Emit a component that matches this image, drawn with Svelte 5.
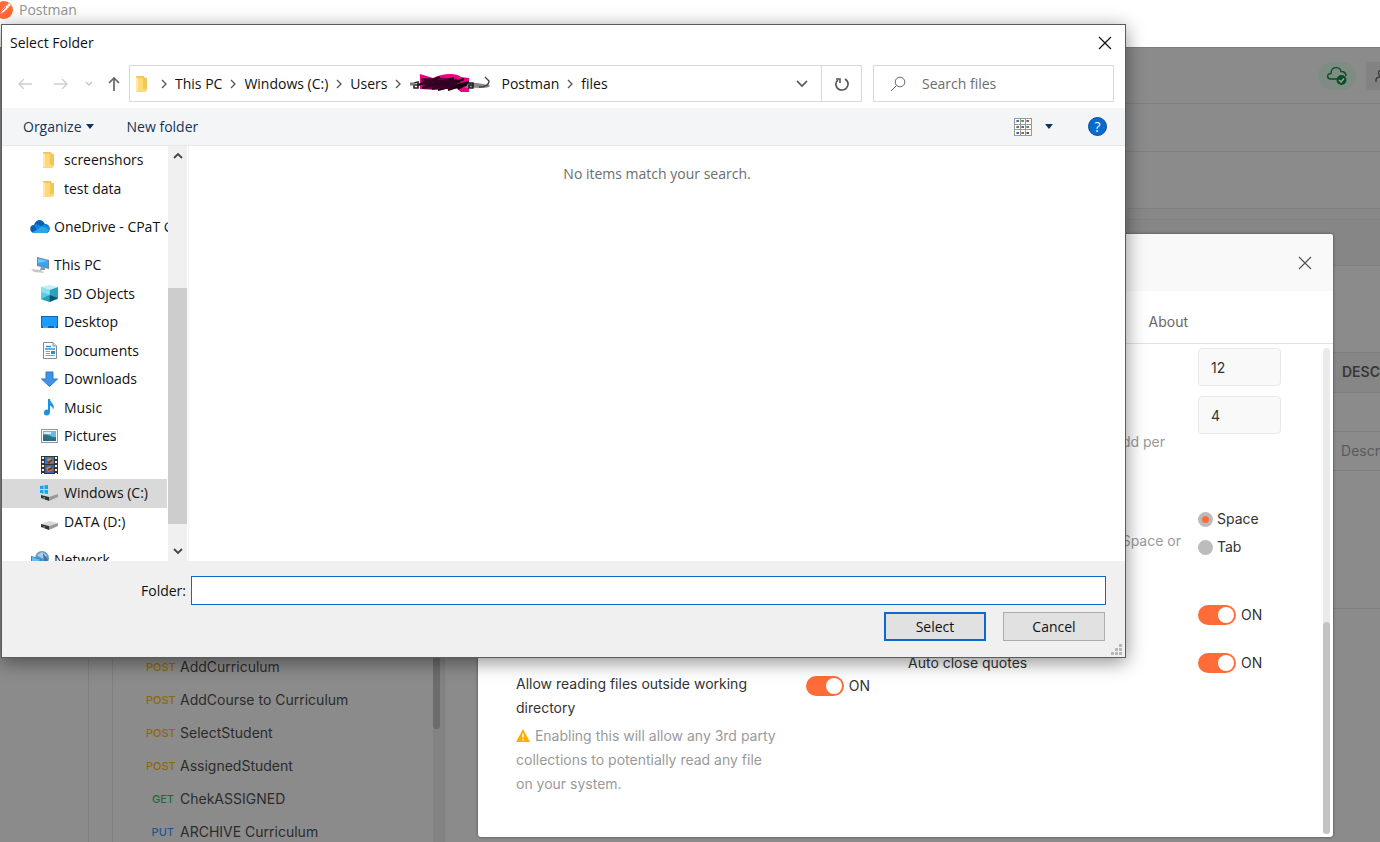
<script>
  let folder = "";
  let search = "";
  let fontSize = 12;
  let indentCount = 4;
  let indentType = "space";
  let allowOutside = true;
  let autoCloseBrackets = true;
  let autoCloseQuotes = true;
  let selected = "Windows (C:)";

  const requests = [
    { method: "POST", name: "AddCurriculum" },
    { method: "POST", name: "AddCourse to Curriculum" },
    { method: "POST", name: "SelectStudent" },
    { method: "POST", name: "AssignedStudent" },
    { method: "GET", name: "ChekASSIGNED" },
    { method: "PUT", name: "ARCHIVE Curriculum" },
  ];

  // Groups of the navigation tree, from top to bottom
  const groups = [
    {
      size: "pair",
      items: [
        { icon: "folder", name: "screenshors", child: true },
        { icon: "folder", name: "test data", child: true },
      ],
    },
    { size: "single", items: [{ icon: "cloud", name: "OneDrive - CPaT G" }] },
    {
      size: "computer",
      items: [
        { icon: "pc", name: "This PC" },
        { icon: "cube", name: "3D Objects", child: true },
        { icon: "desktop", name: "Desktop", child: true },
        { icon: "document", name: "Documents", child: true },
        { icon: "download", name: "Downloads", child: true },
        { icon: "music", name: "Music", child: true },
        { icon: "picture", name: "Pictures", child: true },
        { icon: "video", name: "Videos", child: true },
        { icon: "system", name: "Windows (C:)", child: true },
        { icon: "drive", name: "DATA (D:)", child: true },
      ],
    },
    { size: "single", items: [{ icon: "network", name: "Network" }] },
  ];

  const tileColors = [
    "#2b8a8a", "#5a9a3c", "#c8511b",
    "#c8511b", "#2a6fc0", "#4f9a4a",
    "#2a6fc0", "#c8511b", "#b8361b",
  ];
  const grip = [[8, 0], [4, 4], [8, 4], [0, 8], [4, 8], [8, 8]];
</script>

<div class="postman">
  <header class="titleBar">
    <svg class="logo" width="14" height="20" viewBox="0 0 14 20">
      <circle cx="4" cy="10" r="9" fill="#ff6c37" />
      <path d="M-1 14 L2 10 L7 5 L9 7 L4 12 Z" fill="#fff" />
      <path d="M-1 14 L6 7" stroke="#ff6c37" fill="none" />
      <circle cx="9" cy="5" r="1.500" fill="#fff" />
    </svg>
    <span>Postman</span>
  </header>

  <main class="workspace">
    <div class="rail"></div>
    <div class="gutter"></div>
    <aside class="collections">
      <ul>
        {#each requests as request}
          <li>
            <span class="method {request.method.toLowerCase()}">{request.method}</span>
            <span>{request.name}</span>
          </li>
        {/each}
      </ul>
      <div class="listTrack"><div class="listThumb"></div></div>
    </aside>

    <section class="requestPane">
      <div class="paneHeader">
        <span class="sync">
          <svg width="22" height="20" viewBox="0 0 22 20">
            <path
              d="M11 13 H5 C1 13 0 8 5 7.500 C5 0 14 0 15 5.500 C18 5.500 20 7 20 10"
              fill="none" stroke="#0b4d28" stroke-width="1.400"
            />
            <circle cx="15.500" cy="14" r="5" fill="#0b4d28" />
            <path d="M13 14 L15 16 L18 12.500" fill="none" stroke="#98a79e" stroke-width="1.400" />
          </svg>
        </span>
        <span class="invite">
          <svg width="5" height="16" viewBox="0 0 5 16">
            <circle cx="6" cy="5" r="2.500" fill="none" stroke="#3d3d3d" stroke-width="1.500" />
            <path d="M1 14 V12 C1 10 3 9 6 9" fill="none" stroke="#3d3d3d" stroke-width="1.500" />
          </svg>
        </span>
      </div>
      <div class="tabs"></div>
      <div class="crumbs"></div>
      <div class="gap"></div>
      <div class="address"></div>
      <div class="subTabs"></div>
      <table>
        <thead><tr><th>DESC</th></tr></thead>
        <tbody>
          <tr><td></td></tr>
          <tr><td>Descr</td></tr>
        </tbody>
      </table>
      <div class="rest"></div>
    </section>
  </main>

  <section class="settings" aria-label="Settings">
    <div class="settingsHeader">
      <button class="closeSettings" aria-label="Close settings">
        <svg width="14" height="14" viewBox="0 0 14 14">
          <path d="M1 1 L13 13 M13 1 L1 13" stroke="#555" stroke-width="1.200" />
        </svg>
      </button>
    </div>
    <nav class="settingsTabs"><button>About</button></nav>
    <div class="settingsBody">
      <div class="general">
        <div>
          <label for="outside">Allow reading files outside working directory</label>
          <p>
            <svg width="14" height="13" viewBox="0 0 14 13">
              <path d="M7 0 L14 13 H0 Z" fill="#ffae00" />
              <path d="M7 4.500 V8.500 M7 10 V11.500" stroke="#fff" stroke-width="1.600" />
            </svg>
            Enabling this will allow any 3rd party collections to potentially read any file on your system.
          </p>
        </div>
        <div class="toggle">
          <input id="outside" type="checkbox" bind:checked={allowOutside} />
          <span>{allowOutside ? "ON" : "OFF"}</span>
        </div>
      </div>

      <div class="editor">
        <div class="row short">
          <span></span>
          <input class="number" type="text" aria-label="Font size" bind:value={fontSize} />
        </div>
        <div class="row tall">
          <span class="hint">add per</span>
          <input class="number" type="text" aria-label="Indentation count" bind:value={indentCount} />
        </div>
        <div class="row medium">
          <span class="hint wide">Space or</span>
          <div class="radios">
            <label><input type="radio" value="space" bind:group={indentType} />Space</label>
            <label><input type="radio" value="tab" bind:group={indentType} />Tab</label>
          </div>
        </div>
        <div class="row short">
          <span></span>
          <label class="toggle">
            <input type="checkbox" aria-label="Auto close brackets" bind:checked={autoCloseBrackets} />
            <span>{autoCloseBrackets ? "ON" : "OFF"}</span>
          </label>
        </div>
        <div class="row short">
          <label for="quotes">Auto close quotes</label>
          <div class="toggle">
            <input id="quotes" type="checkbox" bind:checked={autoCloseQuotes} />
            <span>{autoCloseQuotes ? "ON" : "OFF"}</span>
          </div>
        </div>
      </div>
      <div class="bodyTrack"><div class="bodyThumb"></div></div>
    </div>
  </section>
</div>

{#snippet chevron()}
  <svg class="chevron" width="6" height="10" viewBox="0 0 6 10">
    <path d="M1 1 L5 5 L1 9" fill="none" stroke="#555" stroke-width="1.300" />
  </svg>
{/snippet}

{#snippet icon(name)}
  <svg class="icon" width="20" height="20" viewBox="0 0 20 20">
    {#if name === "folder"}
      <path d="M3 2 H11 L12 4 H14 V16 L12 18 H3 Z" fill="#f3c65b" />
      <path d="M3 3 L5 4 V18 L3 17 Z" fill="#ffe9a6" />
      <path d="M5 4 H10 V15 H14 V16 L12 18 H5 Z" fill="#ffd978" />
    {:else if name === "cloud"}
      <path d="M4 16 C-1 15 -1 8 4 8 C6 2 12 1 15 7 C21 7 21 16 16 16 Z" fill="#0a5eb8" />
      <path d="M4 8 C7 6 9 8 11 9 L15 7 C21 7 21 16 16 16 H9 Z" fill="#1484d8" />
      <path d="M3 15 L11 10 C14 9 17 11 19 13 L16 16 H4 Z" fill="#28a8ea" />
    {:else if name === "pc"}
      <path d="M7 2 L19 5 V14 L7 11 Z" fill="#6f8797" />
      <path d="M8 3.500 L18 6 V12.500 L8 10 Z" fill="#32a8f4" />
      <path d="M8 3.500 L18 6 L8 8 Z" fill="#70c8ff" />
      <path d="M11 12 L15 13 V15 L10 15 Z" fill="#8d979d" />
      <path d="M1 14 L11 15 L14 18 L4 17 Z" fill="#c3c8cb" />
    {:else if name === "cube"}
      <path d="M9.500 1 L18 3 L9.500 6 L1 3 Z" fill="#c2f0f9" />
      <path d="M1 3 L9.500 6 V18 L1 15 Z" fill="#5ccbe2" />
      <path d="M18 3 L9.500 6 V18 L18 15 Z" fill="#2ba3c0" />
      <path d="M1 15 L9.500 11 V18 Z" fill="#27a0c0" />
      <path d="M18 14 L9.500 11 V18 Z" fill="#0b5674" />
      <path d="M1 3 L9.500 6 V11 L1 8 Z" fill="#8be0ef" />
    {:else if name === "desktop"}
      <rect x="1" y="4" width="17" height="12" fill="#0b6ab8" />
      <rect x="2" y="5" width="15" height="9" fill="#1a9cff" />
      <path d="M3 15 H8 M14 15 H16" stroke="#9bd5ff" />
    {:else if name === "document"}
      <path d="M3.500 1.500 H13 L16.500 5 V17.500 H3.500 Z" fill="#fff" stroke="#7f8b92" />
      <path d="M13 1.500 V5 H16.500" fill="#dfe4e7" stroke="#7f8b92" />
      <path d="M6 5.500 H11 M5 8 H15" stroke="#2696e8" stroke-width="1.500" />
      <path d="M5.500 10.500 H10 M5.500 12.500 H10 M5.500 14.500 H15" stroke="#8ca4b3" />
      <rect x="11" y="10" width="4" height="3" fill="#248edb" />
    {:else if name === "download"}
      <path d="M6 3 H13 V10 H17.500 L9.500 17.500 L1.500 10 H6 Z" fill="#4092e5" stroke="#2878c8" />
    {:else if name === "music"}
      <path d="M8 1 H10 C10 5 16 6 13 12 C13 9 11 8 10 7.500 V14 C10 19 3 18 4 14.500 C4 12 7 11 8 12 Z" fill="#1b91e8" />
    {:else if name === "picture"}
      <rect x="1.500" y="3.500" width="16" height="13" fill="#fff" stroke="#8c989e" />
      <rect x="3" y="5" width="13" height="10" fill="#65b9eb" />
      <path d="M3 9 C8 7 11 12 16 11 V15 H3 Z" fill="#347765" />
      <path d="M3 12 C9 11 12 13 16 13 V15 H3 Z" fill="#226b9e" />
      <path d="M4 7 H11" stroke="#d7f0ff" stroke-width="2" />
    {:else if name === "video"}
      <rect x="1" y="1" width="17" height="18" fill="#343434" />
      <rect x="5" y="2" width="9" height="7" fill="#287bd0" />
      <rect x="5" y="10" width="9" height="8" fill="#2867bd" />
      <path d="M3 2 V19 M16 2 V19" stroke="#eee" stroke-width="2" stroke-dasharray="2 2" />
      <path d="M7 4 L11 3 L13 7 L9 8 Z M6 13 L10 11 L13 15 L8 17 Z" fill="#d88b2b" />
      <path d="M8 8 L12 5 M8 15 L12 13" stroke="#7d3520" stroke-width="2" />
    {:else if name === "drive" || name === "system"}
      <path d="M1 12 L9 9 L18 11 L9 14 Z" fill="#d9d9d9" />
      <path d="M1 12 L9 14 V18 L1 15 Z" fill="#333" />
      <path d="M9 14 L18 11 V14 L9 18 Z" fill="#9a9a9a" />
      <circle cx="4" cy="15" r="1" fill="#4ca974" />
      {#if name === "system"}
        <path d="M0 3 L3.500 2.500 V6 H0 Z M4.500 2.300 L8 2 V6 H4.500 Z M0 7 H3.500 V10.500 L0 10 Z M4.500 7 H8 V11 L4.500 10.600 Z" fill="#19a3ef" />
      {/if}
    {:else if name === "network"}
      <circle cx="12" cy="8" r="7" fill="#6a9cc3" />
      <path d="M7 5 L12 2 L17 5 L14 9 L10 7 Z" fill="#a7cee5" />
      <path d="M13 3 L18 10 L14 14 Z" fill="#3e749e" />
      <path d="M1 6 L12 9 V18 L1 16 Z" fill="#1e88d0" />
      <path d="M2 7 L11 10 L2 13 Z" fill="#64c1f7" />
    {/if}
  </svg>
{/snippet}

<div class="picker" role="dialog" aria-labelledby="pickerTitle">
  <div class="pickerTitle">
    <span id="pickerTitle">Select Folder</span>
    <button aria-label="Close">
      <svg width="14" height="14" viewBox="0 0 14 14">
        <path d="M1 1 L13 13 M13 1 L1 13" stroke="#111" stroke-width="1.200" />
      </svg>
    </button>
  </div>

  <div class="navigation">
    <div class="history">
      <button aria-label="Back">
        <svg width="16" height="14" viewBox="0 0 16 14">
          <path d="M15 7 H2 M7 2 L2 7 L7 12" fill="none" stroke="#cfcfcf" stroke-width="1.400" />
        </svg>
      </button>
      <button aria-label="Forward">
        <svg width="16" height="14" viewBox="0 0 16 14">
          <path d="M1 7 H14 M9 2 L14 7 L9 12" fill="none" stroke="#cfcfcf" stroke-width="1.400" />
        </svg>
      </button>
      <button class="recent" aria-label="Recent locations">
        <svg width="8" height="6" viewBox="0 0 8 6">
          <path d="M1 1 L4 4 L7 1" fill="none" stroke="#c4c4c4" stroke-width="1.400" />
        </svg>
      </button>
      <button class="up" aria-label="Up">
        <svg width="14" height="16" viewBox="0 0 14 16">
          <path d="M7 15 V2 M2 7 L7 2 L12 7" fill="none" stroke="#666" stroke-width="1.700" />
        </svg>
      </button>
    </div>
    <div class="path">
      {@render icon("folder")}
      {@render chevron()}
      <button>This PC</button>
      {@render chevron()}
      <button>Windows (C:)</button>
      {@render chevron()}
      <button>Users</button>
      {@render chevron()}
      <button aria-label="User folder">
        <svg width="84" height="22" viewBox="0 0 84 22">
          <path d="M11 1 L24 5 C34 0 48 0 52 4 L60 5 V19 H52 L47 15 L27 17 L11 16 Z" fill="#ef0087" />
          <path d="M59 10 C68 9 75 12 81 12 L80 14 C73 16 65 14 56 15 Z" fill="#888" />
          <path
            d="M9 12 L31 4 L16 13 L45 5 L23 16 L55 6 L29 17 L60 9 L39 17 L58 11 L49 16 M15 7 L51 9 M12 10 L58 12 M13 15 L48 7"
            fill="none" stroke="#17000f" stroke-width="2"
          />
          <path d="M12 5 H39 L50 9 L44 16 H14 Z" fill="#3f0028" opacity=".75" />
          <path d="M5 10 L9 9 V15 L5 15 V12 H9 M59 10 L64 10 V15 H60 V12 H64" fill="none" stroke="#222" stroke-width="1.600" />
          <path d="M76 4 L80 8 C80 13 76 14 70 14" fill="none" stroke="#444" stroke-width="1.400" />
          <path d="M1 11 H6" stroke="#777" stroke-width="3" />
        </svg>
      </button>
      <button>Postman</button>
      {@render chevron()}
      <button>files</button>
      <button class="previous" aria-label="Previous locations">
        <svg width="12" height="8" viewBox="0 0 12 8">
          <path d="M1 1 L6 6 L11 1" fill="none" stroke="#555" stroke-width="1.700" />
        </svg>
      </button>
      <button class="refresh" aria-label="Refresh">
        <svg width="16" height="16" viewBox="0 0 16 16">
          <path d="M11 3 C17 7 13 14 8 14 C2 14 0 7 4 4" fill="none" stroke="#555" stroke-width="1.600" />
          <path d="M2 3 H6 V7" fill="none" stroke="#555" stroke-width="1.600" />
        </svg>
      </button>
    </div>
    <label class="search">
      <svg width="16" height="16" viewBox="0 0 16 16">
        <circle cx="10" cy="6" r="4.800" fill="none" stroke="#666" />
        <path d="M6.500 9.500 L1 15" stroke="#666" />
      </svg>
      <input type="text" placeholder="Search files" aria-label="Search files" bind:value={search} />
    </label>
  </div>

  <div class="commands">
    <button class="organize">
      Organize
      <svg width="8" height="5" viewBox="0 0 8 5"><path d="M0 0 H8 L4 5 Z" fill="#16335c" /></svg>
    </button>
    <button>New folder</button>
    <button class="view" aria-label="Change view">
      <svg width="18" height="18" viewBox="0 0 18 18">
        <rect x=".5" y=".5" width="17" height="17" fill="#fff" stroke="#999" />
        <path d="M6.500 0 V18 M11.500 0 V18 M0 6.500 H18 M0 11.500 H18" stroke="#999" />
        {#each tileColors as color, i}
          <rect x={2 + (i % 3) * 5} y={2 + Math.floor(i / 3) * 6} width="3" height="2" fill={color} />
          <rect x={2 + (i % 3) * 5} y={2 + Math.floor(i / 3) * 6} width="1" height="2" fill="#7fa6c9" />
        {/each}
      </svg>
      <svg width="8" height="5" viewBox="0 0 8 5"><path d="M0 0 H8 L4 5 Z" fill="#16335c" /></svg>
    </button>
    <button class="help" aria-label="Help">?</button>
  </div>

  <div class="browser">
    <div class="tree">
      {#each groups as group}
        <ul class={group.size}>
          {#each group.items as item}
            <li>
              <button
                class:child={item.child}
                class:selected={item.name === selected}
                on:click={() => (selected = item.name)}
              >
                {@render icon(item.icon)}
                <span>{item.name}</span>
              </button>
            </li>
          {/each}
        </ul>
      {/each}
    </div>
    <div class="treeScroll">
      <svg width="10" height="7" viewBox="0 0 10 7">
        <path d="M1 6 L5 2 L9 6" fill="none" stroke="#444" stroke-width="1.800" />
      </svg>
      <div class="treeThumb"></div>
      <svg width="10" height="7" viewBox="0 0 10 7">
        <path d="M1 1 L5 5 L9 1" fill="none" stroke="#444" stroke-width="1.800" />
      </svg>
    </div>
    <div class="files">No items match your search.</div>
  </div>

  <div class="footer">
    <label for="folder">Folder:</label>
    <input id="folder" type="text" bind:value={folder} />
    <div class="actions">
      <button class="primary">Select</button>
      <button>Cancel</button>
    </div>
    <svg class="grip" width="11" height="11" viewBox="0 0 11 11">
      {#each grip as [x, y]}
        <rect {x} {y} width="3" height="3" fill="#b8b8b8" />
      {/each}
    </svg>
  </div>
</div>

<style>
  :global(body) {
    overflow: hidden;
    background: #fff;
  }

  :global(*) {
    box-sizing: border-box;
  }

  button {
    display: flex;
    align-items: center;
    border: 0;
    background: none;
    padding: 0;
    color: inherit;
    font: inherit;
  }

  ul {
    margin: 0;
    padding: 0;
    list-style: none;
  }

  svg {
    flex: none;
  }

  .postman {
    display: flex;
    position: relative;
    flex-direction: column;
    height: 100vh;
    overflow: hidden;
    color: #333;
    font: 14px/24px Inter, sans-serif;
  }

  .titleBar {
    display: flex;
    flex: none;
    gap: 5px;
    height: 47px;
    color: #929292;
    font: 14px/20px "Open Sans", sans-serif;
  }

  .workspace {
    display: flex;
    flex: 1;
    min-height: 0;
    border-top: 1px solid #7c7c7c;
    background: #8b8b8b;
    color: #2b2b2b;
  }

  .rail {
    width: 89px;
    border-right: 1px solid #7f7f7f;
  }

  .gutter {
    width: 24px;
    border-right: 1px solid #7f7f7f;
  }

  .collections {
    display: flex;
    justify-content: space-between;
    width: 332px;
    border-right: 1px solid #7f7f7f;
  }

  .collections ul {
    align-self: flex-end;
    margin-bottom: -6px;
    padding-left: 33px;
  }

  .collections li {
    display: flex;
    gap: 6px;
    align-items: center;
    height: 33px;
  }

  .method {
    width: 28px;
    font-size: 11px;
    font-weight: 500;
    text-align: right;
  }

  .post {
    color: #8f6807;
  }

  .get {
    color: #1a6b3a;
  }

  .put {
    color: #23568d;
  }

  .listTrack {
    width: 11px;
    background: #838383;
  }

  .listThumb {
    width: 7px;
    height: 681px;
    border-radius: 4px;
    background: #6c6c6c;
  }

  .requestPane {
    display: flex;
    flex: 1;
    flex-direction: column;
    min-width: 0;
  }

  .requestPane > div {
    flex: none;
    border-bottom: 1px solid #7f7f7f;
  }

  .requestPane .paneHeader {
    display: flex;
    gap: 10px;
    justify-content: flex-end;
    align-items: center;
    height: 56px;
  }

  .sync {
    display: flex;
    justify-content: center;
    align-items: center;
    width: 38px;
    height: 28px;
    border-radius: 14px;
    background: #7e8d84;
  }

  .invite {
    display: flex;
    justify-content: flex-end;
    align-items: center;
    width: 14px;
    height: 28px;
    border-radius: 4px 0 0 4px;
    background: #828282;
  }

  .tabs {
    height: 48px;
  }

  .crumbs {
    height: 57px;
  }

  .gap {
    height: 11px;
    background: #888;
  }

  .address {
    height: 46px;
    background: #868686;
  }

  .subTabs {
    height: 87px;
  }

  table {
    width: 100%;
    border-collapse: collapse;
  }

  tr {
    height: 39px;
  }

  th,
  td {
    border-bottom: 1px solid #7f7f7f;
    padding: 0;
    text-align: right;
  }

  th {
    background: #868686;
    color: #383838;
    font-weight: 600;
  }

  td {
    color: #5b5b5b;
  }

  .rest {
    height: 138px;
  }

  .settings {
    display: flex;
    position: absolute;
    top: 234px;
    right: 47px;
    bottom: 5px;
    left: 478px;
    flex-direction: column;
    border-radius: 3px;
    box-shadow: 0 0 3px rgba(0, 0, 0, 0.5);
    background: #fff;
    overflow: hidden;
  }

  .settingsHeader {
    display: flex;
    flex: none;
    justify-content: flex-end;
    align-items: center;
    height: 57px;
    background: #f9f9f9;
    padding-right: 21px;
  }

  .settingsTabs {
    display: flex;
    flex: none;
    justify-content: flex-end;
    height: 53px;
    border-bottom: 1px solid #e2e2e2;
    padding: 10px 145px 0 0;
    color: #666;
  }

  .settingsBody {
    display: flex;
    flex: 1;
    justify-content: space-between;
    min-height: 0;
    padding: 4px 3px 3px 38px;
  }

  .general {
    display: flex;
    justify-content: space-between;
    align-self: flex-end;
    width: 392px;
    padding: 0 38px 38px 0;
  }

  .general > div:first-child {
    width: 264px;
  }

  .general label {
    display: block;
    width: 250px;
  }

  .general p {
    margin: 4px 0 0;
    color: #9a9a9a;
  }

  .general svg {
    margin-right: 1px;
    vertical-align: -1px;
  }

  .toggle {
    display: flex;
    gap: 5px;
    align-items: center;
    height: 28px;
  }

  input[type="checkbox"] {
    display: flex;
    justify-content: flex-end;
    align-items: center;
    appearance: none;
    margin: 0;
    width: 38px;
    height: 20px;
    border-radius: 10px;
    background: #ff6c37;
    padding: 2px;
  }

  input[type="checkbox"]::before {
    width: 16px;
    height: 16px;
    border-radius: 50%;
    background: #fff;
    content: "";
  }

  .editor {
    flex: 1;
    padding-right: 40px;
  }

  .row {
    display: grid;
    grid-template-columns: 290px 84px;
    align-items: start;
  }

  .short {
    height: 48px;
  }

  .medium {
    height: 96px;
  }

  .tall {
    height: 109px;
  }

  .row > label:first-child {
    line-height: 28px;
  }

  .number {
    width: 83px;
    height: 38px;
    border: 1px solid #e8e8e8;
    border-radius: 4px;
    background: #f9f9f9;
    padding: 0 12px;
    color: #333;
    font: inherit;
  }

  .hint {
    padding: 34px 33px 0 0;
    color: #9a9a9a;
    text-align: right;
  }

  .wide {
    padding: 24px 17px 0 0;
  }

  .radios label {
    display: flex;
    gap: 4px;
    align-items: center;
    height: 28px;
  }

  input[type="radio"] {
    appearance: none;
    margin: 0;
    width: 15px;
    height: 15px;
    border: 4px solid #bcbcbc;
    border-radius: 50%;
    background: #bcbcbc;
  }

  input[type="radio"]:checked {
    background: #ff6c37;
  }

  .bodyTrack {
    display: flex;
    align-items: flex-end;
    width: 7px;
    border-radius: 4px;
    background: #eaeaea;
  }

  .bodyThumb {
    width: 7px;
    height: 212px;
    border-radius: 4px;
    background: #c2c2c2;
  }

  .picker {
    display: flex;
    position: absolute;
    top: 24px;
    right: 254px;
    left: 1px;
    flex-direction: column;
    border: 1px solid #5c5c5c;
    box-shadow: 0 4px 18px rgba(0, 0, 0, 0.45);
    background: #fff;
    color: #111;
    font: 14px/20px "Open Sans", sans-serif;
  }

  .pickerTitle {
    display: flex;
    justify-content: space-between;
    align-items: center;
    height: 35px;
    padding: 0 13px 0 8px;
  }

  .navigation {
    display: flex;
    height: 48px;
    padding: 5px 11px 6px 15px;
  }

  .history {
    display: flex;
    flex: none;
    gap: 20px;
    align-items: center;
    width: 112px;
  }

  .recent {
    margin-left: -4px;
  }

  .up {
    margin-left: -6px;
  }

  .path {
    display: flex;
    flex: 1;
    gap: 8px;
    align-items: center;
    border: 1px solid #d9d9d9;
    padding-left: 3px;
    white-space: nowrap;
  }

  .previous {
    margin-left: auto;
    padding-right: 5px;
  }

  .refresh {
    justify-content: center;
    align-self: stretch;
    width: 40px;
    border-left: 1px solid #d9d9d9;
  }

  .search {
    display: flex;
    flex: none;
    gap: 16px;
    align-items: center;
    margin-left: 11px;
    width: 241px;
    border: 1px solid #d9d9d9;
    padding-left: 16px;
  }

  .search input {
    width: 100%;
    min-width: 0;
    border: 0;
    outline: 0;
    padding: 0;
    font: inherit;
  }

  .search input::placeholder {
    color: #6d6d6d;
  }

  .commands {
    display: flex;
    gap: 33px;
    align-items: center;
    height: 38px;
    border-bottom: 1px solid #e4e6e8;
    background: #f4f5f7;
    padding: 0 18px 0 21px;
    color: #16335c;
  }

  .organize {
    gap: 4px;
  }

  .view {
    gap: 13px;
    margin-right: 2px;
    margin-left: auto;
  }

  .help {
    justify-content: center;
    width: 19px;
    height: 19px;
    border: 1px solid #0b4c91;
    border-radius: 50%;
    background: #0a6ad0;
    color: #fff;
  }

  .browser {
    display: flex;
    height: 415px;
  }

  .tree {
    display: flex;
    flex: none;
    flex-direction: column;
    gap: 10px;
    width: 166px;
    overflow: hidden;
  }

  .tree ul {
    display: grid;
    flex: none;
    grid-auto-rows: 1fr;
  }

  .pair {
    height: 57px;
  }

  .single {
    height: 28px;
  }

  .computer {
    height: 285px;
  }

  .tree button {
    gap: 4px;
    width: 165px;
    height: 100%;
    padding-left: 28px;
    white-space: nowrap;
  }

  .tree .child {
    padding-left: 38px;
  }

  .tree .selected {
    background: #d9d9d9;
  }

  .treeScroll {
    display: flex;
    flex: none;
    flex-direction: column;
    justify-content: space-between;
    align-items: center;
    width: 19px;
    background: #f0f0f0;
    padding: 6px 0;
  }

  .treeThumb {
    margin-top: 105px;
    width: 19px;
    height: 236px;
    background: #cdcdcd;
  }

  .files {
    flex: 1;
    margin-left: 1px;
    border-left: 1px solid #f0f0f0;
    padding-top: 18px;
    color: #6d6d6d;
    text-align: center;
  }

  .footer {
    display: grid;
    position: relative;
    grid-template-columns: 184px 1fr;
    gap: 7px 5px;
    background: #f0f0f0;
    padding: 15px 19px 16px 0;
  }

  .footer label {
    align-self: center;
    text-align: right;
  }

  .footer input {
    height: 29px;
    border: 1px solid #0a6ad0;
    outline: 0;
    background: #fff;
    padding: 0 6px;
    font: inherit;
  }

  .actions {
    display: flex;
    grid-column: 2;
    gap: 17px;
    justify-content: flex-end;
    padding-right: 1px;
  }

  .actions button {
    justify-content: center;
    width: 102px;
    height: 29px;
    border: 1px solid #adadad;
    background: #e1e1e1;
  }

  .actions .primary {
    border: 2px solid #0a6ad0;
  }

  .grip {
    position: absolute;
    right: 3px;
    bottom: 2px;
  }
</style>
